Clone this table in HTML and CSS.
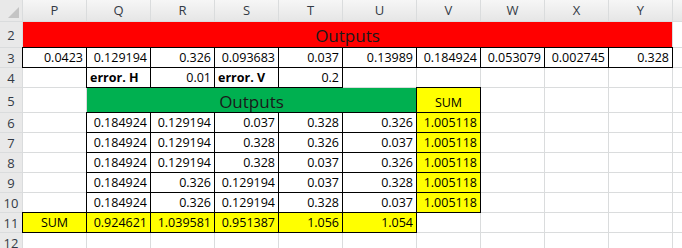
FILE: index.html
```html
<!DOCTYPE html>
<html>
<head>
<meta charset="utf-8">
<link rel="stylesheet" href="styles.css">
</head>
<body>
<div class="sheet">
  <div class="h corner"><span class="tri"></span></div>
  <div class="h">P</div><div class="h">Q</div><div class="h">R</div><div class="h">S</div><div class="h">T</div><div class="h">U</div><div class="h">V</div><div class="h">W</div><div class="h">X</div><div class="h">Y</div><div class="h"></div>

  <div class="h rn">2</div>
  <div class="c red title">Outputs</div>
  <div class="c"></div>

  <div class="h rn">3</div>
  <div class="c b n">0.0423</div><div class="c b n">0.129194</div><div class="c b n">0.326</div><div class="c b n">0.093683</div><div class="c b n">0.037</div><div class="c b n">0.13989</div><div class="c b n">0.184924</div><div class="c b n">0.053079</div><div class="c b n">0.002745</div><div class="c b n">0.328</div>
  <div class="c"></div>

  <div class="h rn">4</div>
  <div class="c"></div><div class="c b t bold">error. H</div><div class="c b n">0.01</div><div class="c b t bold">error. V</div><div class="c b n">0.2</div><div class="c"></div><div class="c"></div><div class="c"></div><div class="c"></div><div class="c"></div><div class="c"></div>

  <div class="h rn">5</div>
  <div class="c"></div><div class="c green title">Outputs</div><div class="c b yel m">SUM</div><div class="c"></div><div class="c"></div><div class="c"></div><div class="c"></div>

  <div class="h rn">6</div>
  <div class="c"></div><div class="c b n">0.184924</div><div class="c b n">0.129194</div><div class="c b n">0.037</div><div class="c b n">0.328</div><div class="c b n">0.326</div><div class="c b yel n">1.005118</div><div class="c"></div><div class="c"></div><div class="c"></div><div class="c"></div>

  <div class="h rn">7</div>
  <div class="c"></div><div class="c b n">0.184924</div><div class="c b n">0.129194</div><div class="c b n">0.328</div><div class="c b n">0.326</div><div class="c b n">0.037</div><div class="c b yel n">1.005118</div><div class="c"></div><div class="c"></div><div class="c"></div><div class="c"></div>

  <div class="h rn">8</div>
  <div class="c"></div><div class="c b n">0.184924</div><div class="c b n">0.129194</div><div class="c b n">0.328</div><div class="c b n">0.037</div><div class="c b n">0.326</div><div class="c b yel n">1.005118</div><div class="c"></div><div class="c"></div><div class="c"></div><div class="c"></div>

  <div class="h rn">9</div>
  <div class="c"></div><div class="c b n">0.184924</div><div class="c b n">0.326</div><div class="c b n">0.129194</div><div class="c b n">0.037</div><div class="c b n">0.328</div><div class="c b yel n">1.005118</div><div class="c"></div><div class="c"></div><div class="c"></div><div class="c"></div>

  <div class="h rn">10</div>
  <div class="c"></div><div class="c b n">0.184924</div><div class="c b n">0.326</div><div class="c b n">0.129194</div><div class="c b n">0.328</div><div class="c b n">0.037</div><div class="c b yel n">1.005118</div><div class="c"></div><div class="c"></div><div class="c"></div><div class="c"></div>

  <div class="h rn">11</div>
  <div class="c b yel m">SUM</div><div class="c b yel n">0.924621</div><div class="c b yel n">1.039581</div><div class="c b yel n">0.951387</div><div class="c b yel n">1.056</div><div class="c b yel n">1.054</div><div class="c"></div><div class="c"></div><div class="c"></div><div class="c"></div><div class="c"></div>

  <div class="h rn">12</div>
  <div class="c"></div><div class="c"></div><div class="c"></div><div class="c"></div><div class="c"></div><div class="c"></div><div class="c"></div><div class="c"></div><div class="c"></div><div class="c"></div><div class="c"></div>
</div>
</body>
</html>
```
FILE: styles.css
```css
html, body {
  margin: 0;
  padding: 0;
  background: #ffffff;
  overflow: hidden;
}

.sheet {
  display: grid;
  grid-template-columns: 22px repeat(5, 63px) 73px repeat(4, 63px) 20px;
  grid-template-rows: 21px 25px 19px 19px 24px repeat(7, 19px) 19px;
  gap: 1px;
  background: #dadcdd;
  width: 700px;
  font-family: "Open Sans", "Liberation Sans", sans-serif;
  font-size: 12.5px;
  color: #000;
}

.h {
  background: linear-gradient(#f6f6f6, #e6e6e6);
  color: #333a45;
  font-size: 13px;
  display: flex;
  align-items: center;
  justify-content: center;
  line-height: 1;
}

.rn {
  background: #e9e9e9;
  padding-top: 2px;
}

.corner {
  position: relative;
  background: #e9e9e9;
}

.tri {
  position: absolute;
  right: 3px;
  bottom: 3px;
  width: 0;
  height: 0;
  border-left: 11px solid transparent;
  border-bottom: 11px solid #c4c4c4;
}

.c {
  background: #ffffff;
  display: flex;
  align-items: flex-end;
  padding: 0 3px 1px;
  line-height: 17px;
  white-space: nowrap;
  overflow: visible;
}

.b {
  outline: 1px solid #000;
}

.n { justify-content: flex-end; }
.t { justify-content: flex-start; }
.m { justify-content: center; }
.bold { font-weight: bold; }

.red {
  background: #ff0000;
  grid-column: 2 / 12;
}

.green {
  background: #00b050;
  grid-column: 3 / 8;
}

.yel { background: #ffff00; }

.title {
  justify-content: center;
  align-items: center;
  font-size: 17px;
  color: #1a1a1a;
  padding: 2px 0 0;
}
```
